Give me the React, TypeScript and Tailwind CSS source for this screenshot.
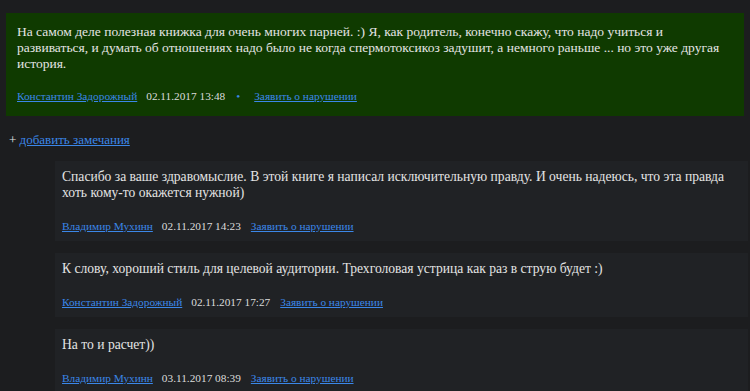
import React from "react";

interface Reply {
    author: string;
    date: string;
    text: string;
}

const replies: Reply[] = [
    {
        author: "Владимир Мухинн",
        date: "02.11.2017 14:23",
        text: "Спасибо за ваше здравомыслие. В этой книге я написал исключительную правду. И очень надеюсь, что эта правда хоть кому-то окажется нужной)",
    },
    {
        author: "Константин Задорожный",
        date: "02.11.2017 17:27",
        text: "К слову, хороший стиль для целевой аудитории. Трехголовая устрица как раз в струю будет :)",
    },
    {
        author: "Владимир Мухинн",
        date: "03.11.2017 08:39",
        text: "На то и расчет))",
    },
];

const Meta: React.FC<{ author: string; date: string; dot?: boolean }> = ({ author, date, dot }) => (
    <div className="flex items-center text-[11.3px] leading-[14px]">
        <a href="#" className="text-[#3b87e8] underline">{author}</a>
        <span className="ml-[9px] text-[#dcdcdc]">{date}</span>
        {dot && <span className="ml-[11px] text-[#3b87e8]">•</span>}
        <a href="#" className={`${dot ? "ml-[14px]" : "ml-[10px]"} text-[#3b87e8] underline`}>Заявить о нарушении</a>
    </div>
);

export default function App() {
    return (
        <div className="h-[391px] overflow-hidden bg-[#1c1d1f] pt-[13px] font-['Liberation_Serif'] text-[#e4e4e4]">
            <div className="mx-[6px] bg-[#0f3a00] pl-[11px] pr-[16px] pt-[11px] pb-[13px]">
                <p className="text-[13.5px] leading-[16px]">
                    На самом деле полезная книжка для очень многих парней. :) Я, как родитель, конечно скажу, что надо учиться и развиваться, и думать об отношениях надо было не когда спермотоксикоз задушит, а немного раньше ... но это уже другая история.
                </p>
                <div className="mt-[17px]">
                    <Meta author="Константин Задорожный" date="02.11.2017 13:48" dot />
                </div>
            </div>

            <div className="mt-[16px] pl-[9px] text-[13px] leading-[16px]">
                + <a href="#" className="text-[#3b87e8] underline">добавить замечания</a>
            </div>

            <div className="mt-[13px] ml-[55px] mr-[2px] flex flex-col gap-[12px]">
                {replies.map((r, i) => (
                    <div key={i} className="bg-[#202225] pl-[7px] pr-[6px] pt-[8px] pb-[8px]">
                        <p className="text-[13.6px] leading-[16px]">{r.text}</p>
                        <div className="mt-[18px]">
                            <Meta author={r.author} date={r.date} />
                        </div>
                    </div>
                ))}
            </div>
        </div>
    );
}
